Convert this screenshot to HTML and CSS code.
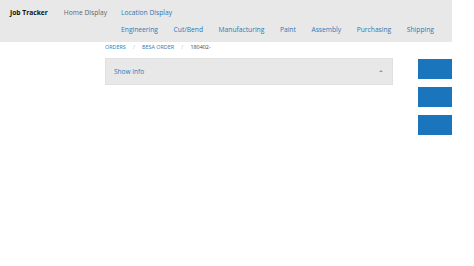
FILE: index.html
```html
<!DOCTYPE html>
<html lang="en">
<head>
    <meta charset="UTF-8">
    <meta name="viewport" content="width=device-width, initial-scale=1.0">
    <title>Job Tracker</title>
    <link rel="stylesheet" href="styles.css">
</head>
<body>
    <div class="navbar">
        <a class="brand" href="#">Job Tracker</a>
        <ul class="nav nav-main">
            <li><a href="#">Home Display</a></li>
        </ul>
        <div class="nav-right">
            <ul class="nav nav-blue">
                <li><a href="#">Location Display</a></li>
            </ul>
            <ul class="nav nav-blue">
                <li><a href="#">Engineering</a></li>
                <li><a href="#">Cut/Bend</a></li>
                <li><a href="#">Manufacturing</a></li>
                <li><a href="#">Paint</a></li>
                <li><a href="#">Assembly</a></li>
                <li><a href="#">Purchasing</a></li>
                <li><a href="#">Shipping</a></li>
            </ul>
        </div>
    </div>

    <div class="page">
        <div class="content">
            <ol class="breadcrumb">
                <li><a href="#">Orders</a></li>
                <li class="sep">/</li>
                <li><a href="#">Besa Order</a></li>
                <li class="sep">/</li>
                <li class="active">180402-</li>
            </ol>

            <div class="panel">
                <span class="panel-title">Show Info</span>
                <span class="caret"></span>
            </div>
        </div>

        <div class="side-buttons">
            <button class="btn"></button>
            <button class="btn"></button>
            <button class="btn"></button>
        </div>
    </div>
</body>
</html>
```

FILE: styles.css
```css
* {
    margin: 0;
    padding: 0;
    box-sizing: border-box;
}

body {
    font-family: 'Open Sans', 'Noto Sans', sans-serif;
    font-size: 6.7px;
    background: white;
    color: #333;
}

a {
    text-decoration: none;
}

.navbar {
    width: 452px;
    height: 42px;
    background: #e8e8e8;
    display: flex;
    align-items: flex-start;
}

.brand {
    color: #111;
    font-weight: bold;
    margin: 8px 0 0 10px;
    line-height: 10px;
}

.nav {
    list-style: none;
    display: flex;
}

.nav-main {
    margin: 8px 0 0 16px;
    line-height: 10px;
}

.nav-main a {
    color: #666;
}

.nav-right {
    margin: 8px 0 0 14px;
    display: flex;
    flex-direction: column;
    gap: 7px;
    line-height: 10px;
}

.nav-blue {
    gap: 15.6px;
}

.nav-blue a {
    color: #2a79b8;
}

.page {
    display: flex;
    width: 452px;
}

.content {
    margin-left: 105px;
    width: 288px;
}

.breadcrumb {
    list-style: none;
    display: flex;
    gap: 7.2px;
    font-size: 5.4px;
    text-transform: uppercase;
    margin-top: 1px;
    line-height: 8px;
}

.breadcrumb a {
    color: #2a79b8;
}

.breadcrumb .sep {
    color: #bbb;
}

.breadcrumb .active {
    color: #444;
}

.panel {
    margin-top: 7px;
    height: 27px;
    background: #e8e8e8;
    border: 1px solid #e0e0e0;
    display: flex;
    align-items: center;
    justify-content: space-between;
    padding: 0 9px 0 8px;
}

.panel-title {
    color: #2a79b8;
    font-size: 6.5px;
}

.caret {
    width: 0;
    height: 0;
    border-left: 2px solid transparent;
    border-right: 2px solid transparent;
    border-bottom: 2px solid #999;
    margin-bottom: 1px;
}

.side-buttons {
    margin-left: 25px;
    margin-top: 17px;
    display: flex;
    flex-direction: column;
    gap: 8px;
}

.btn {
    width: 34px;
    height: 20px;
    border: none;
    background: #1a75bd;
}
```
